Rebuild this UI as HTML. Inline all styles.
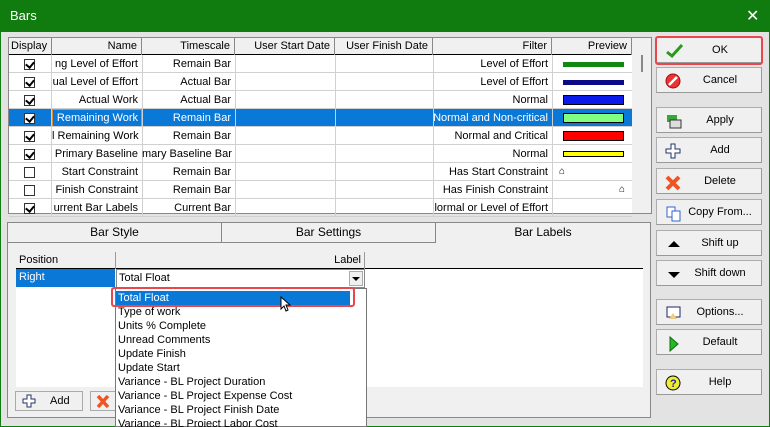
<!DOCTYPE html>
<html><head><style>
*{box-sizing:border-box;margin:0;padding:0}
html,body{width:770px;height:427px;overflow:hidden}
body{font-family:"Liberation Sans",sans-serif;font-size:11px;color:#000;background:#107c10;position:relative}
.a{position:absolute}
#win{left:1px;top:32px;width:768px;height:394px;background:#e3e3e3}
.cell{position:absolute;white-space:nowrap;overflow:hidden;text-align:right;padding-right:4px;line-height:18px;height:18px}
.btn{position:absolute;left:656px;width:106px;height:26px;background:#f0f0f0;border:1px solid #adadad;border-right-color:#999;border-bottom-color:#999;text-align:center;line-height:25px;padding-left:22px;white-space:nowrap}
.btn svg{position:absolute;left:8px;top:5px}
.cb{position:absolute;left:24px;width:11px;height:11px;border:1px solid #333;background:#fff}
.cb.c::after{content:"";position:absolute;left:2px;top:0px;width:4px;height:6px;border:solid #000;border-width:0 2px 2px 0;transform:rotate(40deg)}
.li{position:absolute;left:116px;width:234px;height:14px;line-height:14px;padding-left:2px}
</style></head><body>
<div class="a" style="left:10px;top:8px;color:#fff;font-size:13px">Bars</div>
<div class="a" style="left:746px;top:6px;color:#fff;font-size:16px">✕</div>
<div class="a" id="win"></div>
<div class="a" style="left:8px;top:37px;width:644px;height:177px;background:#fff;border:1px solid #888"></div>
<div class="a" style="left:9px;top:38px;width:623px;height:17px;background:#f0f0f0;border-bottom:1px solid #000"></div>
<div class="a" style="left:632px;top:38px;width:19px;height:175px;background:#f0f0f0"></div>
<div class="a" style="left:641px;top:55px;width:2px;height:17px;background:#888"></div>
<div class="a" style="left:9px;top:109px;width:623px;height:18px;background:#0a78d7"></div>
<div class="a" style="left:52px;top:109px;width:90px;height:18px;border:1px solid #e8892b"></div>
<div id="g"></div>
<div class="btn" style="top:37px">OK<svg width="20" height="16"><path d="M2 9 L7 13 L17 2" stroke="#2a9a1a" stroke-width="3" fill="none"/></svg></div>
<div class="a" style="left:655px;top:36px;width:108px;height:29px;border:2px solid #e8474d;border-radius:3px"></div>
<div class="btn" style="top:67px">Cancel<svg width="18" height="18"><circle cx="8" cy="8" r="7" fill="#e33" stroke="#911"/><path d="M4 12 L12 4" stroke="#fff" stroke-width="2.5"/></svg></div>
<div class="btn" style="top:107px">Apply<svg width="18" height="18"><rect x="2" y="2" width="10" height="7" fill="#3a3"/><rect x="5" y="7" width="11" height="8" fill="#ddd" stroke="#333"/></svg></div>
<div class="btn" style="top:137px">Add<svg width="18" height="18"><path d="M6 1h4v5h5v4h-5v5h-4v-5h-5v-4h5z" fill="#fff" stroke="#236" /></svg></div>
<div class="btn" style="top:168px">Delete<svg width="18" height="18"><path d="M2 3 L14 15 M14 3 L2 15" stroke="#e52" stroke-width="4"/></svg></div>
<div class="btn" style="top:199px">Copy From...<svg width="18" height="18"><rect x="2" y="2" width="8" height="10" fill="#fff" stroke="#36c"/><rect x="7" y="6" width="8" height="10" fill="#fff" stroke="#36c"/></svg></div>
<div class="btn" style="top:230px">Shift up<svg width="18" height="18"><path d="M3 11 L9 5 L15 11z" fill="#000"/></svg></div>
<div class="btn" style="top:260px">Shift down<svg width="18" height="18"><path d="M3 6 L9 12 L15 6z" fill="#000"/></svg></div>
<div class="btn" style="top:299px">Options...<svg width="18" height="18"><rect x="2" y="2" width="13" height="10" fill="#fff" stroke="#226"/><path d="M4 14 L8 8 L12 14z" fill="#ec8"/></svg></div>
<div class="btn" style="top:329px">Default<svg width="18" height="18"><path d="M5 2 L13 9 L5 16z" fill="#2b2" stroke="#161"/></svg></div>
<div class="btn" style="top:369px">Help<svg width="18" height="18"><circle cx="8" cy="8" r="7" fill="#ee3" stroke="#000"/><text x="5" y="12" font-size="11" font-weight="bold" fill="#22a" font-family="Liberation Sans">?</text></svg></div>
<div class="a" style="left:7px;top:222px;width:644px;height:196px;background:#f0f0f0;border:1px solid #888"></div>
<div class="a" style="left:8px;top:222px;width:214px;height:21px;border:1px solid #888;border-top:none;border-left:none;text-align:center;line-height:21px;font-size:12px">Bar Style</div>
<div class="a" style="left:222px;top:222px;width:214px;height:21px;border-bottom:1px solid #888;border-right:1px solid #888;text-align:center;line-height:21px;font-size:12px">Bar Settings</div>
<div class="a" style="left:436px;top:222px;width:214px;height:21px;text-align:center;line-height:21px;font-size:12px">Bar Labels</div>
<div class="a" style="left:16px;top:251px;width:627px;height:136px;background:#fff;border-top:1px solid #ccc"></div>
<div class="a" style="left:16px;top:251px;width:349px;height:18px;background:#f0f0f0;border-bottom:1px solid #000"></div>
<div class="a" style="left:365px;top:251px;width:278px;height:18px;background:#f0f0f0;border-bottom:1px solid #000"></div>
<div class="a" style="left:19px;top:252px;line-height:16px">Position</div>
<div class="a" style="left:115px;top:252px;width:250px;height:17px;border-left:1px solid #999;border-right:1px solid #999;text-align:right;padding-right:3px;line-height:16px">Label</div>
<div class="a" style="left:16px;top:269px;width:99px;height:18px;background:#0a78d7;color:#fff;padding-left:3px;line-height:16px">Right</div>
<div class="a" style="left:116px;top:269px;width:249px;height:19px;border:1px solid #888;background:#fff;padding-left:2px;line-height:17px">Total Float</div>
<div class="a" style="left:349px;top:271px;width:14px;height:15px;background:#f0f0f0;border:1px solid #aaa"></div>
<div class="a" style="left:352px;top:277px;border:4px solid transparent;border-top:4px solid #000"></div>
<div class="a" style="left:15px;top:391px;width:68px;height:20px;background:#f0f0f0;border:1px solid #aaa;line-height:18px;padding-left:34px">Add</div>
<svg class="a" style="left:22px;top:394px" width="16" height="16"><path d="M5 1h4v4h4v4h-4v4h-4v-4h-4v-4h4z" fill="#fff" stroke="#236"/></svg>
<div class="a" style="left:90px;top:391px;width:30px;height:20px;background:#f0f0f0;border:1px solid #aaa"></div>
<svg class="a" style="left:96px;top:394px" width="16" height="16"><path d="M2 2 L12 13 M12 2 L2 13" stroke="#e52" stroke-width="3.5"/></svg>
<div class="a" style="left:115px;top:288px;width:252px;height:139px;background:#fff;border:1px solid #777"></div>
<div class="a" style="left:116px;top:291px;width:234px;height:14px;background:#0a78d7"></div>
<div id="l"></div>
<div class="a" style="left:111px;top:287px;width:244px;height:20px;border:2px solid #e8474d;border-radius:3px"></div>
<svg class="a" style="left:280px;top:296px" width="12" height="18"><path d="M1 1 L1 13 L4 10 L6 15 L8 14 L6 9 L10 9z" fill="#fff" stroke="#000"/></svg>
<script>
var rows=[["ng Level of Effort","Remain Bar","Level of Effort","l","#118811",1],["ual Level of Effort","Actual Bar","Level of Effort","l","#0a0a88",1],["Actual Work","Actual Bar","Normal","b","#0a1ae8",1],["Remaining Work","Remain Bar","Normal and Non-critical","b","#80ff80",1],["l Remaining Work","Remain Bar","Normal and Critical","b","#ff0000",1],["Primary Baseline","mary Baseline Bar","Normal","s","#ffff00",1],["Start Constraint","Remain Bar","Has Start Constraint","h1","",0],["Finish Constraint","Remain Bar","Has Finish Constraint","h2","",0],["urrent Bar Labels","Current Bar","lormal or Level of Effort","","",1]];
var h='',hd=[["Display",9,43,"center"],["Name",51,91],["Timescale",142,93],["User Start Date",235,100],["User Finish Date",335,98],["Filter",433,119],["Preview",552,80]];
hd.forEach(function(c){h+='<div class="cell" style="top:38px;left:'+c[1]+'px;width:'+c[2]+'px;height:17px;line-height:17px;border-right:1px solid #888;'+(c[3]?'text-align:left;padding-left:2px':'')+'">'+c[0]+'</div>'});
rows.forEach(function(r,i){var t=55+i*18,sel=i==3,col=sel?'color:#fff;':'';
h+='<div class="a" style="left:9px;top:'+(t+17)+'px;width:623px;height:1px;background:#d0d0d0"></div>';
[51,142,235,335,433,552].forEach(function(x){h+='<div class="a" style="left:'+x+'px;top:'+t+'px;width:1px;height:18px;background:#d0d0d0"></div>'});
h+='<div class="cb '+(r[5]?'c':'')+'" style="top:'+(t+4)+'px"></div>';
h+='<div class="cell" style="'+col+'top:'+t+'px;left:52px;width:90px">'+r[0]+'</div>';
h+='<div class="cell" style="'+col+'top:'+t+'px;left:142px;width:93px">'+r[1]+'</div>';
h+='<div class="cell" style="'+col+'top:'+t+'px;left:433px;width:119px">'+r[2]+'</div>';
if(r[3]=='l')h+='<div class="a" style="left:563px;top:'+(t+7)+'px;width:61px;height:5px;background:'+r[4]+'"></div>';
if(r[3]=='b')h+='<div class="a" style="left:563px;top:'+(t+4)+'px;width:61px;height:10px;background:'+r[4]+';border:1px solid #000"></div>';
if(r[3]=='s')h+='<div class="a" style="left:563px;top:'+(t+6)+'px;width:61px;height:6px;background:'+r[4]+';border:1px solid #000"></div>';
if(r[3]=='h1')h+='<div class="a" style="left:559px;top:'+(t+3)+'px;font-size:10px">⌂</div>';
if(r[3]=='h2')h+='<div class="a" style="left:619px;top:'+(t+3)+'px;font-size:10px">⌂</div>';
});
document.getElementById('g').innerHTML=h;
var it=["Total Float","Type of work","Units % Complete","Unread Comments","Update Finish","Update Start","Variance - BL Project Duration","Variance - BL Project Expense Cost","Variance - BL Project Finish Date","Variance - BL Project Labor Cost"],l='';
it.forEach(function(s,i){l+='<div class="li" style="top:'+(291+i*14)+'px;'+(i==0?'color:#fff':'')+'">'+s+'</div>'});
document.getElementById('l').innerHTML=l;
</script>
</body></html>
